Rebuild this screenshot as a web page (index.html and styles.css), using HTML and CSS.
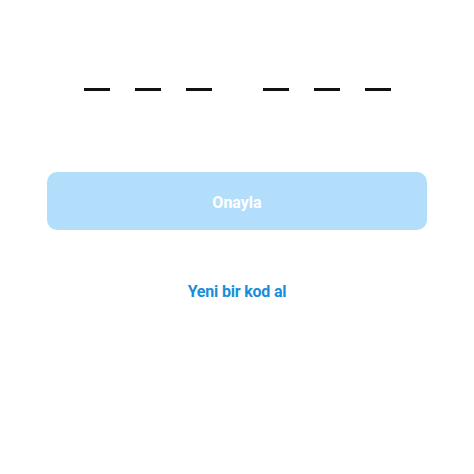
FILE: index.html
```html
<!DOCTYPE html>
<html lang="tr">
<head>
<meta charset="utf-8">
<link rel="stylesheet" href="styles.css">
</head>
<body>
<main class="page">
  <div class="code">
    <div class="group">
      <span class="dash"></span><span class="dash"></span><span class="dash"></span>
    </div>
    <div class="group">
      <span class="dash"></span><span class="dash"></span><span class="dash"></span>
    </div>
  </div>
  <button class="confirm" type="button">Onayla</button>
  <a class="resend" href="#">Yeni bir kod al</a>
</main>
</body>
</html>
```
FILE: styles.css
```css
html, body {
  margin: 0;
  padding: 0;
  background: #ffffff;
}
body {
  font-family: Roboto, "Noto Sans", "Liberation Sans", sans-serif;
  width: 474px;
  height: 474px;
}
.page {
  display: flex;
  flex-direction: column;
  align-items: center;
  padding: 88px 47px 0;
}
.code {
  display: flex;
  gap: 51px;
  height: 3px;
}
.group {
  display: flex;
  gap: 25px;
}
.dash {
  display: block;
  width: 26px;
  height: 3px;
  background: #111111;
}
.confirm {
  margin-top: 81px;
  width: 380px;
  height: 58px;
  border: none;
  border-radius: 10px;
  background: #b3defb;
  color: #ffffff;
  font-family: inherit;
  font-size: 16px;
  font-weight: 700;
  padding: 2px 0 0;
}
.resend {
  margin-top: 52px;
  color: #1a8dd8;
  font-size: 16px;
  font-weight: 700;
  letter-spacing: -0.2px;
  text-decoration: none;
  line-height: 19px;
}
```
